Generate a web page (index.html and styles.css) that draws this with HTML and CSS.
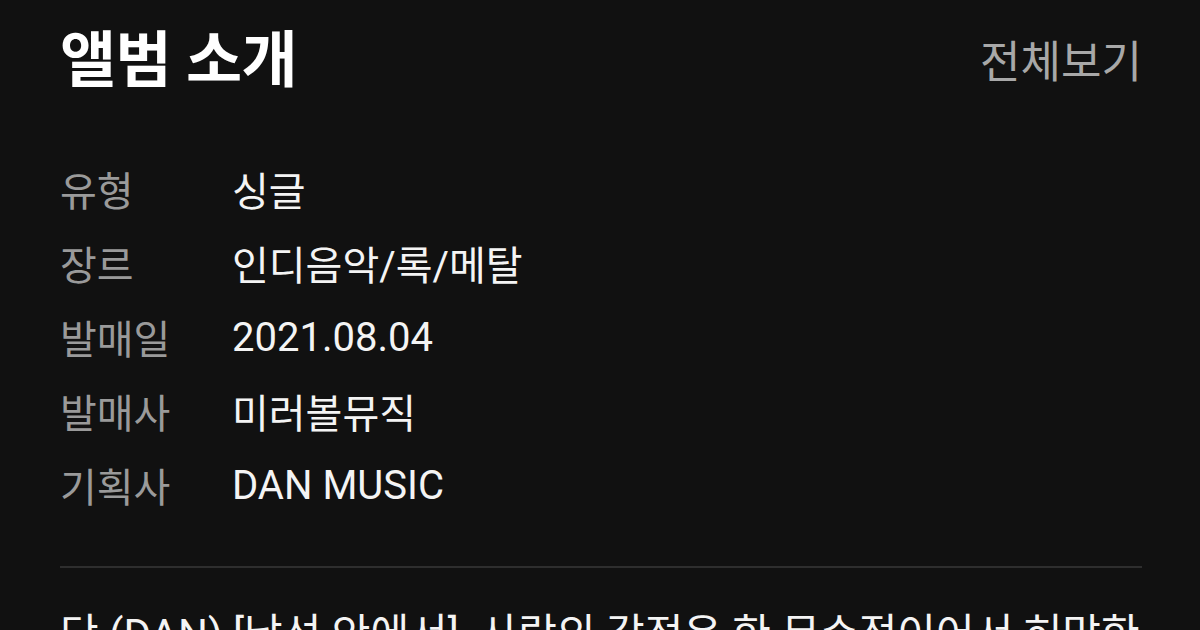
FILE: index.html
```html
<!DOCTYPE html>
<html lang="ko">
<head>
<meta charset="utf-8">
<link rel="stylesheet" href="styles.css">
</head>
<body>
<div class="page">
  <div class="header">
    <h1 class="title">앨범 소개</h1>
    <a class="more">전체보기</a>
  </div>
  <dl class="info">
    <div class="row"><dt>유형</dt><dd>싱글</dd></div>
    <div class="row"><dt>장르</dt><dd>인디음악/록/메탈</dd></div>
    <div class="row"><dt>발매일</dt><dd>2021.08.04</dd></div>
    <div class="row"><dt>발매사</dt><dd>미러볼뮤직</dd></div>
    <div class="row"><dt>기획사</dt><dd>DAN MUSIC</dd></div>
  </dl>
  <hr class="divider">
  <p class="desc">단 (DAN) [낯선 안에서]  사랑의 감정은 한 무수적이어서 허망한</p>
</div>
</body>
</html>
```
FILE: styles.css
```css
html, body {
  margin: 0;
  padding: 0;
  background: #111111;
}
body {
  font-family: Roboto, "Noto Sans CJK KR", sans-serif;
  color: #f2f2f2;
}
.page {
  padding: 0 58px 0 60px;
}
.header {
  display: flex;
  justify-content: space-between;
  align-items: center;
  padding-top: 20px;
  height: 82px;
}
.title {
  margin: 0;
  font-size: 61px;
  font-weight: 700;
  line-height: 82px;
  color: #ffffff;
  letter-spacing: -0.5px;
}
.more {
  font-size: 44px;
  color: #a8a8a8;
  line-height: 82px;
  margin-right: 0;
  position: relative;
  top: 2px;
}
.info {
  margin: 50px 0 0 0;
}
.row {
  display: flex;
  height: 74px;
  align-items: center;
  font-size: 40px;
}
.row dt {
  width: 172px;
  color: #9a9a9a;
}
.row dd {
  margin: 0;
  color: #f4f4f4;
}
.divider {
  margin: 44px 0 0 0;
  border: 0;
  height: 2px;
  background: #2e2e2e;
}
.desc {
  margin: 37px 0 0 0;
  font-size: 42px;
  line-height: 60px;
  white-space: pre;
  color: #f4f4f4;
}
```
